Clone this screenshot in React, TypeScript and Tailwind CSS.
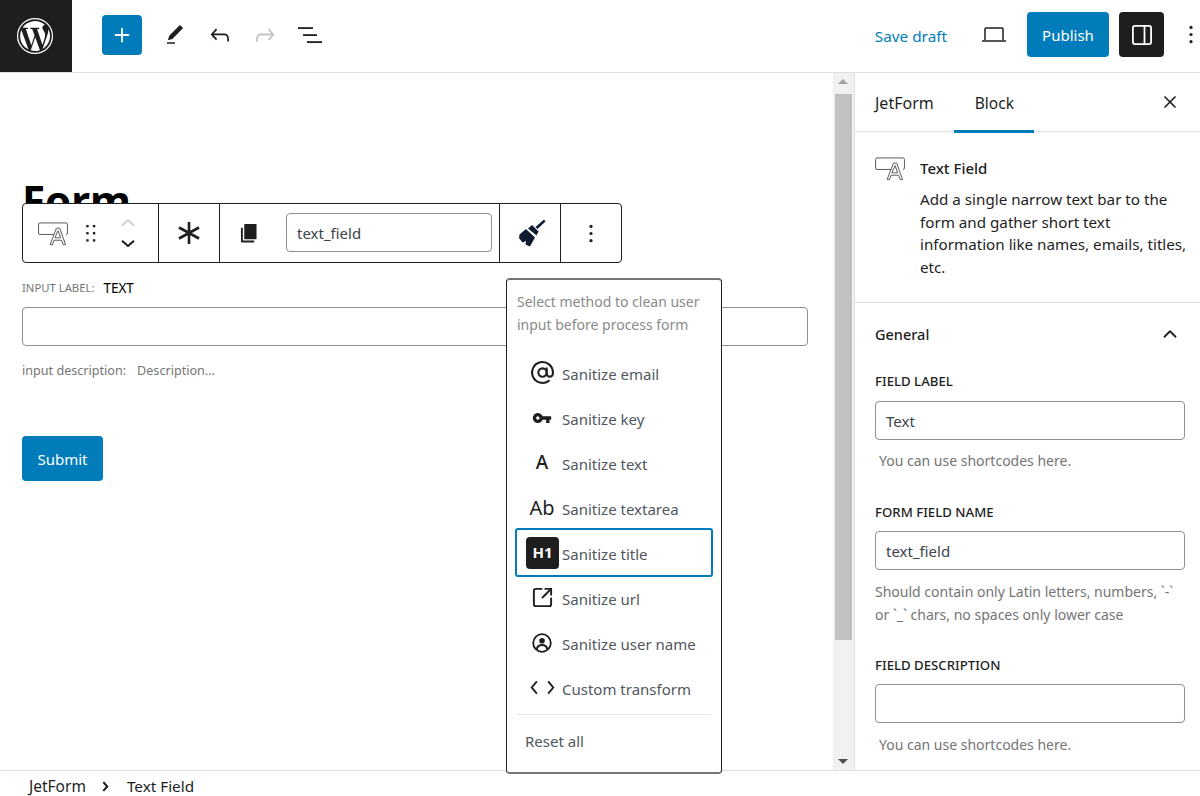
import { Plus, X, ChevronUp, AtSign, SquareArrowOutUpRight } from "lucide-react"
import type { ReactNode } from "react"

const font = "font-['Noto_Sans',sans-serif]"

function TextFieldIcon({ className }: { className?: string }) {
  return (
    <svg viewBox="0 0 32 26" className={className} fill="none" stroke="#555" strokeWidth="1">
      <path d="M17 14H2a1.5 1.5 0 0 1-1.5-1.5v-9A1.5 1.5 0 0 1 2 2h27a1.5 1.5 0 0 1 1.5 1.5v9A1.5 1.5 0 0 1 29 14" />
      <path d="M15 24.5h-2.5L19 7.5h3.5l6 17H26l-1.5-4.5h-8L15 24.5Z" fill="#fff" />
      <path d="M17.5 17.5h6L20.7 10Z" fill="#fff" />
    </svg>
  )
}

function Kebab({ className }: { className?: string }) {
  return (
    <svg viewBox="0 0 4 20" className={className} fill="#1e1e1e">
      <circle cx="2" cy="2.5" r="1.7" />
      <circle cx="2" cy="10" r="1.7" />
      <circle cx="2" cy="17.5" r="1.7" />
    </svg>
  )
}

function TopBar() {
  return (
    <header className="flex h-[73px] shrink-0 items-center border-b border-[#e0e0e0] bg-white pb-[3px]">
      <div className="flex h-[72px] w-[72px] shrink-0 items-center justify-center self-start bg-[#1e1e1e] pb-[1px] pr-[3px]">
        <svg viewBox="0 0 40 40" className="h-[38px] w-[38px]" fill="#fff">
          <path d="M20 1a19 19 0 1 0 0 38 19 19 0 0 0 0-38Zm0 1.3a17.7 17.7 0 1 1 0 35.4 17.7 17.7 0 0 1 0-35.4Z" />
          <path d="M4.3 20a15.7 15.7 0 0 0 8.85 14.13L5.66 13.6A15.64 15.64 0 0 0 4.3 20Zm26.3-.8c0-1.95-.7-3.3-1.3-4.35-.8-1.3-1.55-2.4-1.55-3.7 0-1.45 1.1-2.8 2.65-2.8h.2A15.7 15.7 0 0 0 6.85 11.4h1c1.65 0 4.2-.2 4.2-.2.85-.05.95 1.2.1 1.3 0 0-.85.1-1.8.15l5.73 17.06 3.45-10.33-2.45-6.73c-.85-.05-1.65-.15-1.65-.15-.85-.05-.75-1.35.1-1.3 0 0 2.6.2 4.15.2 1.65 0 4.2-.2 4.2-.2.85-.05.95 1.2.1 1.3 0 0-.85.1-1.8.15l5.7 16.95 1.57-5.25c.68-2.17 1.2-3.73 1.2-5.08Zm-10.33 2.17-4.73 13.75a15.73 15.73 0 0 0 9.65-.25 1.4 1.4 0 0 1-.1-.2l-4.82-13.3Zm13.57-8.95c.07.5.1 1.05.1 1.63 0 1.6-.3 3.4-1.2 5.65l-4.82 13.93A15.7 15.7 0 0 0 33.84 12.42Z" />
        </svg>
      </div>
      <div className="mt-[1px] flex items-center">
        <div className="ml-[30px] flex h-10 w-10 items-center justify-center rounded-sm bg-[#007cba]">
          <Plus size={22} strokeWidth={2} className="text-white" />
        </div>
        <svg viewBox="0 0 24 24" className="ml-[21px] h-6 w-6" fill="#1e1e1e">
          <path d="M20.1 5.1 16.9 2 6.2 12.8l-1.3 4.4 4.5-1.3L20.1 5.1ZM4 20.8h8v-1.5H4v1.5Z" />
        </svg>
        <svg viewBox="0 0 24 24" className="ml-[19px] h-7 w-7" fill="#1e1e1e">
          <path d="M18.3 11.7c-.6-.6-1.4-.9-2.3-.9H6.7l2.9-3.3-1.1-1-4.5 5 4.500 5 1.100-1-2.900-3.300H16c.5 0 .9.2 1.300.5 1 1 1 3.400 1 4.500v.3h1.500v-.2c0-1.500 0-4.300-1.500-5.800Z" />
        </svg>
        <svg viewBox="0 0 24 24" className="ml-[17px] h-7 w-7" fill="#c4c4c4">
          <path d="M15.500 6.500l-1.100 1 2.900 3.300H8c-.9 0-1.700.3-2.300.9-1.400 1.500-1.400 4.300-1.400 5.800v.2h1.500v-.3c0-1.100 0-3.500 1-4.500.3-.3.800-.5 1.300-.5h9.300l-2.900 3.300 1.100 1 4.500-5-4.600-5.200Z" />
        </svg>
        <svg viewBox="0 0 24 24" className="ml-[19px] h-6 w-6" fill="#1e1e1e">
          <rect x="0" y="4.200" width="15" height="1.800" />
          <rect x="5" y="11.200" width="14" height="1.800" />
          <rect x="9" y="18.200" width="15" height="1.800" />
        </svg>
      </div>
      <span className="ml-auto mt-[3px] text-[15.300px] text-[#007cba]">Save draft</span>
      <svg viewBox="0 0 24 15" className="ml-[35px] h-[15px] w-6" fill="none" stroke="#1e1e1e" strokeWidth="1.500">
        <path d="M3 13V2a1 1 0 0 1 1-1h16a1 1 0 0 1 1 1v11" />
        <path d="M0 14h24" />
      </svg>
      <div className="ml-[21px] flex h-[45px] w-[82px] items-center justify-center rounded-sm bg-[#007cba] pt-[1px] text-[15px] text-white">
        Publish
      </div>
      <div className="ml-[10px] flex h-[45px] w-[45px] items-center justify-center rounded-sm bg-[#1e1e1e]">
        <svg viewBox="0 0 20 20" className="h-5 w-5" fill="none" stroke="#fff" strokeWidth="1.800">
          <rect x="0.900" y="0.900" width="18.200" height="18.200" rx="2" />
          <path d="M12.500 1v18" />
        </svg>
      </div>
      <Kebab className="ml-[25px] mr-[7px] h-[19px] w-[4px]" />
    </header>
  )
}

function BlockToolbar() {
  return (
    <div className="absolute left-[22px] top-[130px] flex h-[60px] w-[600px] rounded-sm border border-[#1e1e1e] bg-white">
      <div className="flex w-[136px] items-center border-r border-[#1e1e1e] pl-[15px]">
        <TextFieldIcon className="h-[25px] w-[31px]" />
        <svg viewBox="0 0 12 20" className="ml-[16px] h-[19px] w-[12px]" fill="#1e1e1e">
          <rect x="1" y="1" width="2.500" height="2.500" />
          <rect x="8" y="1" width="2.500" height="2.500" />
          <rect x="1" y="8.500" width="2.500" height="2.500" />
          <rect x="8" y="8.500" width="2.500" height="2.500" />
          <rect x="1" y="16" width="2.500" height="2.500" />
          <rect x="8" y="16" width="2.500" height="2.500" />
        </svg>
        <div className="ml-[24px] flex flex-col gap-[14px]">
          <svg viewBox="0 0 14 7" className="h-[7px] w-[14px]" fill="none" stroke="#c4c4c4" strokeWidth="1.500">
            <path d="M1 6.500 7 1l6 5.500" />
          </svg>
          <svg viewBox="0 0 14 7" className="h-[7px] w-[14px]" fill="none" stroke="#1e1e1e" strokeWidth="2">
            <path d="M1 .8 7 6l6-5.200" />
          </svg>
        </div>
      </div>
      <div className="flex w-[61px] items-center justify-center border-r border-[#1e1e1e]">
        <svg viewBox="0 0 24 24" className="h-6 w-6" stroke="#1e1e1e" strokeWidth="2.600" fill="none">
          <path d="M12 1v22M2 6.500l20 11M22 6.500l-20 11" />
        </svg>
      </div>
      <div className="flex w-[280px] items-center border-r border-[#1e1e1e] pl-[20px]">
        <svg viewBox="0 0 18 22" className="h-[21px] w-[17px]" fill="#1e1e1e">
          <rect x="4.500" y="1" width="13" height="16" rx="0.500" />
          <path d="M1 5h2v13.500h12V20.500H2a1 1 0 0 1-1-1Z" />
        </svg>
        <div className="-mt-[1px] ml-[29px] flex h-[39px] w-[206px] items-center rounded-sm border border-[#8c8f94] pl-[10px] pt-[2px] text-[15px] text-[#3c434a]">
          text_field
        </div>
      </div>
      <div className="flex w-[61px] items-center justify-center border-r border-[#1e1e1e]">
        <svg viewBox="0 0 40 40" className="h-10 w-10" fill="#111c34">
          <path d="M34 6.500 35.500 8.500 27.500 16 25.500 14Z" />
          <path d="M18 15.500 22 12 28.500 18.500 26.500 22.500Z" />
          <path d="M9.500 21.500 16 16 25 24.500 20 33.500 15.500 31.500 16 28 12.500 29.500 9 25Z" />
        </svg>
      </div>
      <div className="flex w-[60px] items-center justify-center">
        <Kebab className="h-[19px] w-[4px]" />
      </div>
    </div>
  )
}

function Canvas() {
  return (
    <div className="relative min-w-0 flex-1 overflow-hidden bg-white px-[22px]">
      <h1 className="mt-[101px] text-[42px] font-bold leading-[52px] text-black">Form</h1>
      <div className="mt-[52px] flex items-center text-[11.300px] leading-[20px] text-[#757575]">
        <span>INPUT LABEL:</span>
        <span className="ml-[9px] text-[13.500px] text-black">TEXT</span>
      </div>
      <div className="mt-[9px] h-[39px] w-[786px] rounded-sm border border-[#8c8f94]" />
      <div className="mt-[15px] flex text-[12.600px] leading-[20px] text-[#757575]">
        <span>input description:</span>
        <span className="ml-[11px]">Description...</span>
      </div>
      <div className="mt-[55px] flex h-[45px] w-[81px] items-center justify-center rounded-sm bg-[#007cba] pt-[1px] text-[15px] text-white">
        Submit
      </div>
      <BlockToolbar />
    </div>
  )
}

const KeyIcon = () => (
  <svg viewBox="0 0 24 24" className="h-5 w-5" fill="#1e1e1e">
    <path d="M12.650 10C11.830 7.670 9.610 6 7 6c-3.310 0-6 2.690-6 6s2.690 6 6 6c2.610 0 4.830-1.670 5.650-4H17v4h4v-4h2v-4H12.650ZM7 14c-1.100 0-2-.9-2-2s.9-2 2-2 2 .9 2 2-.9 2-2 2Z" />
  </svg>
)

const UserIcon = () => (
  <svg viewBox="0 0 20 20" className="h-5 w-5" fill="none" stroke="#1e1e1e" strokeWidth="1.800">
    <circle cx="10" cy="10" r="8.800" />
    <circle cx="10" cy="7.800" r="2.800" fill="#1e1e1e" stroke="none" />
    <path d="M4.800 16c.6-2.700 2.600-4 5.200-4s4.600 1.300 5.200 4" strokeWidth="2.200" />
  </svg>
)

const methods: { label: string; icon?: ReactNode; active?: boolean }[] = [
  { label: "Sanitize email", icon: <AtSign size={25} strokeWidth={2} className="text-[#1e1e1e]" /> },
  { label: "Sanitize key", icon: <KeyIcon /> },
  { label: "Sanitize text", icon: <span className="text-[19px] font-medium leading-none text-[#1e1e1e]">A</span> },
  { label: "Sanitize textarea", icon: <span className="text-[20px] leading-none text-[#1e1e1e]">Ab</span> },
  { label: "Sanitize title", active: true },
  { label: "Sanitize url", icon: <SquareArrowOutUpRight size={23} strokeWidth={2} className="text-[#1e1e1e]" /> },
  { label: "Sanitize user name", icon: <UserIcon /> },
  {
    label: "Custom transform",
    icon: (
      <svg viewBox="0 0 26 16" className="h-[15px] w-[25px]" fill="none" stroke="#1e1e1e" strokeWidth="2">
        <path d="M7 1.500 1.500 8 7 14.500M19 1.500 24.500 8 19 14.500" />
      </svg>
    ),
  },
]

function Popover() {
  return (
    <div className="absolute left-[506px] top-[278px] z-10 h-[496px] w-[216px] rounded-sm border border-y-2 border-[#1e1e1e] border-y-[#757575] bg-white">
      <p className="mt-[10px] px-[10px] text-[14px] leading-[23px] text-[#8a8a8a]">
        Select method to clean user input before process form
      </p>
      <div className="mt-[14px] flex flex-col">
        {methods.map((m) =>
          m.active ? (
            <div
              key={m.label}
              className="relative z-10 mx-[8px] -my-[2px] flex h-[49px] items-center rounded-[3px] border-2 border-[#007cba] bg-white pl-[9px] text-[15px] text-[#50575e]"
            >
              <div className="flex h-[32px] w-[33px] items-center justify-center rounded-sm bg-[#1e1e1e] text-[15px] font-bold text-white">
                H1
              </div>
              <span className="ml-[3px] pt-[3px]">{m.label}</span>
            </div>
          ) : (
            <div key={m.label} className="flex h-[45px] items-center text-[15px] text-[#50575e]">
              <div className="ml-[20px] flex w-[30px] justify-center">{m.icon}</div>
              <span className="ml-[5px] pt-[3px]">{m.label}</span>
            </div>
          ),
        )}
      </div>
      <div className="mx-[10px] mt-[4px] border-t border-[#e6e6e6]" />
      <div className="mt-[16px] pl-[18px] text-[15px] leading-[20px] text-[#50575e]">Reset all</div>
    </div>
  )
}

function Scrollbar() {
  return (
    <div className="flex w-[21px] shrink-0 flex-col items-center bg-[#f1f1f1] pr-[1px]">
      <div className="mt-[6px] h-0 w-0 border-x-[5px] border-b-[5px] border-x-transparent border-b-[#a3a3a3]" />
      <div className="mt-[10px] h-[546px] w-[17px] bg-[#c1c1c1]" />
      <div className="mb-[6px] mt-auto h-0 w-0 border-x-[5px] border-t-[5px] border-x-transparent border-t-[#505050]" />
    </div>
  )
}

function Field({ label, value, children, inputClass }: { label: string; value?: string; children: ReactNode; inputClass: string }) {
  return (
    <div>
      <div className="text-[13.200px] font-medium leading-[20px] text-[#1e1e1e]">{label}</div>
      <div className={`${inputClass} flex h-[39px] w-[310px] items-center rounded-sm border border-[#8c8f94] pl-[10px] pt-[1px] text-[15px] text-[#3c434a]`}>
        {value}
      </div>
      {children}
    </div>
  )
}

function Sidebar() {
  return (
    <aside className="w-[346px] shrink-0 overflow-hidden border-l border-[#e0e0e0] bg-white">
      <div className="flex h-[59px] items-center border-b border-[#e0e0e0] pl-[20px]">
        <span className="pt-[2px] text-[16px] text-[#1e1e1e]">JetForm</span>
        <span className="relative ml-[41px] flex h-[59px] items-center pt-[3px] text-[15.500px] text-[#1e1e1e]">
          Block
          <span className="absolute -bottom-[1px] -left-[21px] -right-[20px] h-[3px] bg-[#007cba]" />
        </span>
        <X size={20} strokeWidth={2} className="ml-auto mr-[20px] text-[#1e1e1e]" />
      </div>
      <div className="flex h-[171px] border-b border-[#e0e0e0] pl-[20px] pt-[24px]">
        <TextFieldIcon className="h-[25px] w-[31px] shrink-0" />
        <div className="ml-[14px] w-[273px]">
          <div className="text-[15px] font-medium leading-[24px] text-[#1e1e1e]">Text Field</div>
          <p className="mt-[8px] text-[15.200px] leading-[22.700px] text-[#1e1e1e]">
            Add a single narrow text bar to the form and gather short text information like names, emails, titles, etc.
          </p>
        </div>
      </div>
      <div className="px-[20px] pt-[20px]">
        <div className="flex h-[24px] items-center justify-between">
          <span className="text-[14.500px] font-medium text-[#1e1e1e]">General</span>
          <ChevronUp size={22} strokeWidth={2} className="-mr-[1px] -mt-[3px] text-[#1e1e1e]" />
        </div>
        <div className="mt-[24px] flex flex-col">
          <Field label="FIELD LABEL" value="Text" inputClass="mt-[10px]">
            <div className="mt-[10px] pl-[4px] text-[14px] leading-[22px] text-[#757575]">You can use shortcodes here.</div>
          </Field>
          <div className="mt-[30px]">
            <Field label="FORM FIELD NAME" value="text_field" inputClass="mt-[9px]">
              <div className="mt-[10px] text-[14px] leading-[23px] text-[#757575]">
                Should contain only Latin letters, numbers, `-` or `_` chars, no spaces only lower case
              </div>
            </Field>
          </div>
          <div className="mt-[29px]">
            <Field label="FIELD DESCRIPTION" inputClass="mt-[9px]">
              <div className="mt-[11px] pl-[4px] text-[14px] leading-[22px] text-[#757575]">You can use shortcodes here.</div>
            </Field>
          </div>
        </div>
      </div>
    </aside>
  )
}

export default function App() {
  return (
    <div className={`relative flex h-[796px] w-[1200px] flex-col overflow-hidden bg-white ${font}`}>
      <TopBar />
      <div className="flex min-h-0 flex-1">
        <Canvas />
        <Scrollbar />
        <Sidebar />
      </div>
      <footer className="flex h-[26px] shrink-0 items-center border-t border-[#e0e0e0] bg-white pl-[29px] pt-[6px] text-[15.300px] text-[#1e1e1e]">
        <span className="pt-[1px] text-[15.500px]">JetForm</span>
        <svg viewBox="0 0 8 12" className="ml-[16px] h-[11px] w-[7px]" fill="none" stroke="#1e1e1e" strokeWidth="2.400">
          <path d="M1.500 1 6 6l-4.500 5" />
        </svg>
        <span className="ml-[18px]">Text Field</span>
      </footer>
      <Popover />
    </div>
  )
}
